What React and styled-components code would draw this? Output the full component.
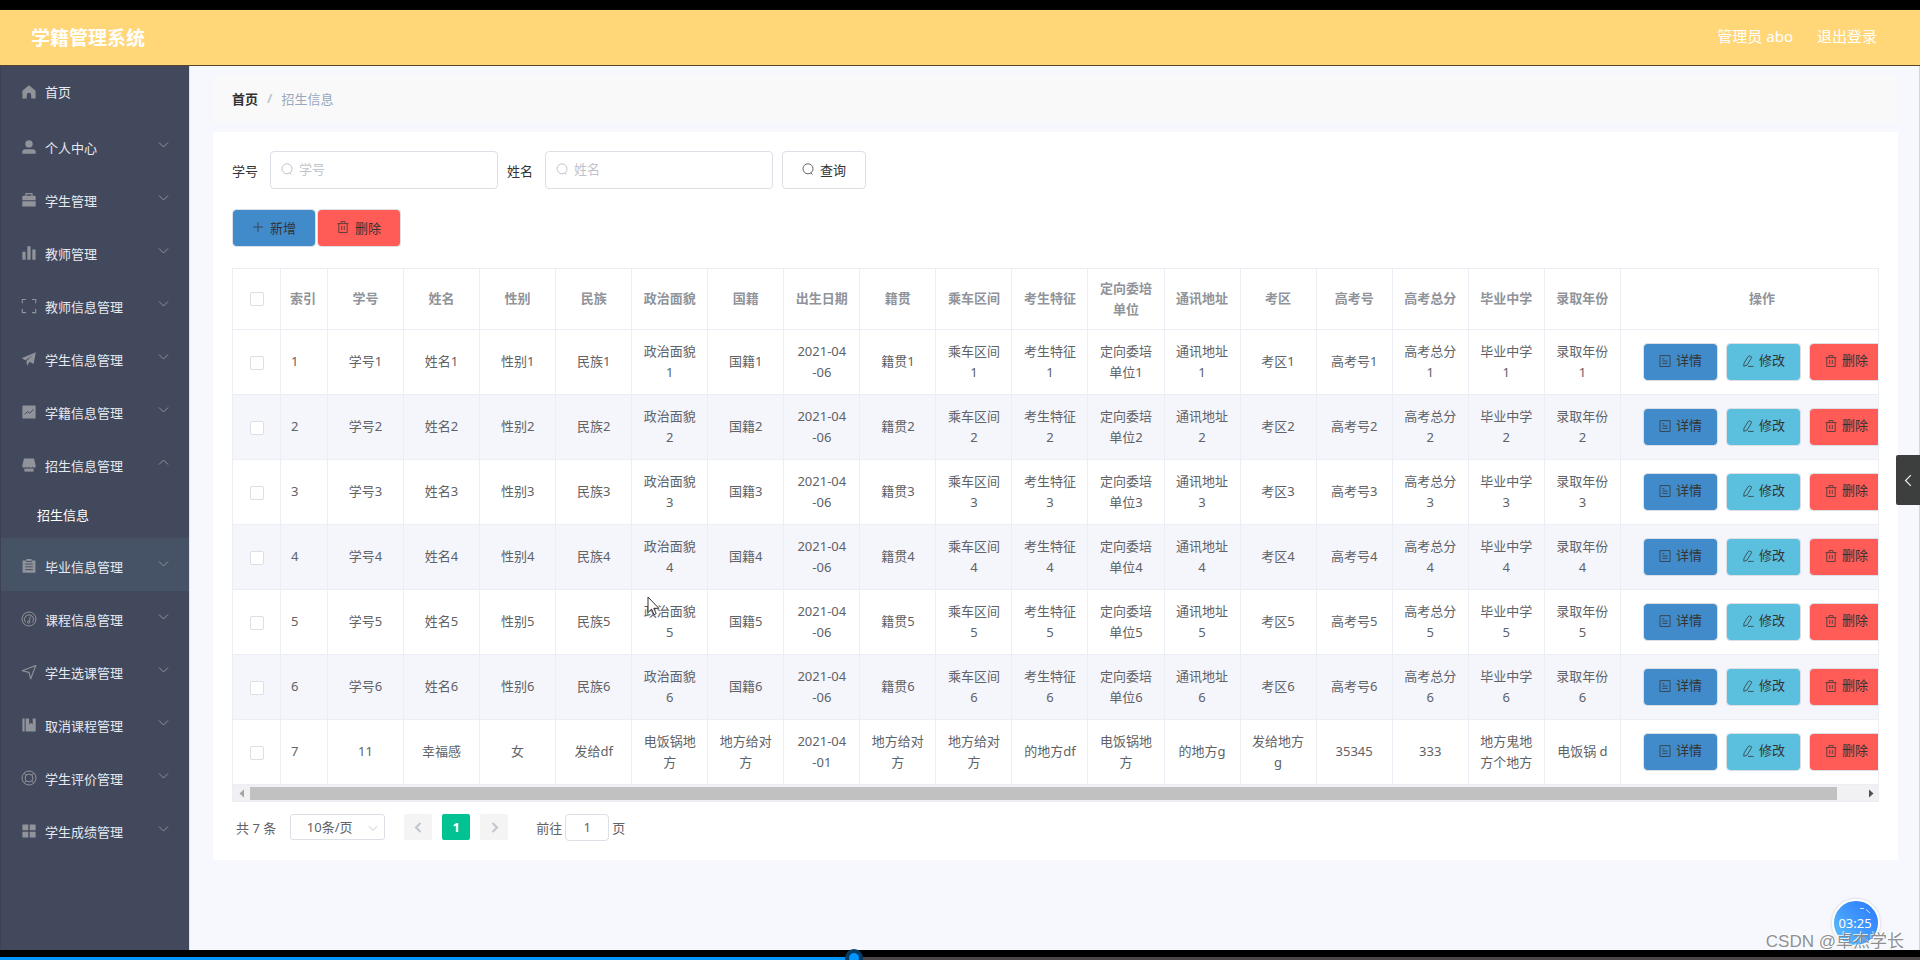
import React, { useState } from "react";
import styled, { createGlobalStyle, css } from "styled-components";

const GlobalStyle = createGlobalStyle`
  *, *::before, *::after { box-sizing: border-box; }
  body {
    margin: 0;
    font-family: "Noto Sans", "Noto Sans CJK SC", sans-serif;
    font-size: 13px;
    color: #333;
    background: #f6f8fd;
  }
  button, input, select { font: inherit; color: inherit; }
  a { color: inherit; text-decoration: none; }
`;

const Page = styled.div`
  position: relative;
  min-height: 100vh;
  display: flex;
  flex-direction: column;
  overflow: hidden;
`;

const TopBar = styled.div`
  height: 10px;
  background: #000;
`;

const Header = styled.header`
  height: 56px;
  padding: 0 43px 2px 31px;
  display: flex;
  align-items: center;
  justify-content: space-between;
  background: #ffd678;
  border-bottom: 1px solid #54452d;
  color: #fff;

  h1 {
    margin: 0;
    font-size: 19px;
    font-weight: 700;
  }
`;

const UserLinks = styled.div`
  display: flex;
  gap: 24px;
  padding-bottom: 2px;
  font-size: 15px;
`;

const Body = styled.div`
  flex: 1;
  display: flex;
`;

const Sidebar = styled.nav`
  width: 189px;
  flex-shrink: 0;
  background: #43495c;
  border-left: 1px solid #3c4153;
`;

const MenuList = styled.ul`
  margin: 0;
  padding: 0;
  list-style: none;
`;

const itemStyle = css`
  width: 100%;
  height: 53px;
  padding: 0 20px 0 21px;
  display: flex;
  align-items: center;
  gap: 9px;
  border: 0;
  background: ${(p) => (p.$hovered ? "#465265" : "transparent")};
  color: #e6eaf3;
  text-align: left;
  cursor: pointer;

  & > svg { color: #909399; flex-shrink: 0; }
`;

const HomeLink = styled.a`
  ${itemStyle}
  padding-bottom: 2px;
`;

const MenuButton = styled.button`
  ${itemStyle}
  padding-top: 3px;
  span { flex: 1; }
  & > svg:last-child { margin-bottom: 5px; }
`;

const SubLink = styled.a`
  height: 48px;
  padding-left: 36px;
  display: flex;
  align-items: center;
  color: #fff;
`;

const Main = styled.main`
  flex: 1;
  min-width: 0;
  padding: 9px 21px 0 23px;
  border-left: 1px solid #dfe4ee;
  border-right: 1px solid #d4d6da;
`;

const Breadcrumb = styled.div`
  height: 48px;
  margin-bottom: 9px;
  padding: 0 19px 2px;
  display: flex;
  align-items: center;
  gap: 9px;
  background: #f9f9f9;
  color: #97a8be;

  a { color: #303133; font-weight: 700; }
  i { color: #c0c4cc; font-weight: 700; font-style: normal; }
`;

const Panel = styled.section`
  padding: 19px 19px 20px;
  background: #fff;
`;

const SearchForm = styled.form`
  display: flex;
  align-items: center;
  gap: 9px;
  margin-bottom: 20px;
`;

const Field = styled.div`
  display: flex;
  align-items: center;
  gap: 12px;
`;

const InputBox = styled.div`
  width: 228px;
  height: 38px;
  padding: 0 10px 2px;
  display: flex;
  align-items: center;
  gap: 6px;
  border: 1px solid #dcdfe6;
  border-radius: 4px;
  color: #c0c4cc;

  input {
    flex: 1;
    min-width: 0;
    padding: 0;
    border: 0;
    outline: 0;
    background: transparent;
    color: #606266;
    &::placeholder { color: #c0c4cc; }
  }
`;

const tones = {
  plain: "#fff",
  blue: "#428bca",
  cyan: "#5bc0de",
  red: "#ff5b57",
};

const Button = styled.button`
  height: 38px;
  padding: 0 ${(p) => (p.$compact ? 15 : 19)}px 2px;
  flex-shrink: 0;
  display: inline-flex;
  align-items: center;
  gap: ${(p) => (p.$compact ? 5 : 6)}px;
  border: 1px solid #dcdfe6;
  border-radius: 4px;
  background: ${(p) => tones[p.$tone]};
  background-clip: ${(p) => (p.$tone === "plain" ? "border-box" : "padding-box")};
  color: #333;
  white-space: nowrap;
  cursor: pointer;

  svg { opacity: 0.75; }
`;

const Actions = styled.div`
  display: flex;
  gap: 1px;
  margin-bottom: 21px;
`;

const TableWrap = styled.div`
  overflow: hidden;
  border: 1px solid #ebeef5;
`;

const Table = styled.table`
  width: calc(100% + 26px);
  table-layout: fixed;
  border-collapse: separate;
  border-spacing: 0;
  color: #606266;
  line-height: 21px;

  th, td {
    height: 65px;
    padding: 0 10px 1px;
    border-right: 1px solid #ebeef5;
    border-bottom: 1px solid #ebeef5;
    text-align: center;
    white-space: pre-line;
    word-break: break-all;
  }
  th {
    height: 61px;
    color: #909399;
    font-weight: 700;
  }
  th:nth-child(2), td:nth-child(2) {
    padding-right: 0;
    text-align: left;
  }
  th:nth-child(2) { padding-left: 9px; }
  tbody tr:nth-child(even) { background: #f5f5fc; }
`;

const Check = styled.input`
  width: 14px;
  height: 14px;
  margin: 0;
  display: inline-block;
  vertical-align: middle;
  appearance: none;
  border: 1px solid #dcdfe6;
  border-radius: 2px;
  background: #fff;
  &:checked { background: #00c292; }
`;

const RowActions = styled.div`
  display: flex;
  gap: 8px;
  padding-left: 12px;
`;

const ScrollBar = styled.div`
  height: 16px;
  display: flex;
  align-items: center;
  background: #f1f1f4;
  color: #505050;

  svg { flex: 0 0 17px; }
  svg:first-child { color: #a3a3a3; }
`;

const ScrollTrack = styled.div`
  flex: 1;
  height: 13px;

  div {
    width: 98.5%;
    height: 100%;
    background: #c1c1c1;
  }
`;

const Pagination = styled.div`
  display: flex;
  align-items: center;
  margin-top: 12px;
  padding-left: 4px;
  height: 26px;
  color: #606266;
`;

const SizeSelect = styled.div`
  position: relative;
  width: 95px;
  margin: 0 19px 0 14px;

  select {
    width: 100%;
    height: 26px;
    padding: 0 24px 0 8px;
    appearance: none;
    border: 1px solid #dcdfe6;
    border-radius: 3px;
    background: #fff;
    text-align: center;
    text-align-last: center;
    font-size: 13px;
  }
  svg {
    position: absolute;
    right: 7px;
    top: 9px;
    color: #c0c4cc;
    pointer-events: none;
  }
`;

const Pager = styled.div`
  display: flex;
  gap: 10px;
`;

const PageButton = styled.button`
  width: 28px;
  height: 26px;
  padding: 0;
  display: flex;
  align-items: center;
  justify-content: center;
  border: 0;
  border-radius: 2px;
  background: ${(p) => (p.$active ? "#00c292" : "#f4f4f5")};
  color: ${(p) => (p.$active ? "#fff" : "#c0c4cc")};
  font-weight: 700;
`;

const Jump = styled.label`
  margin-left: 28px;
  display: flex;
  align-items: center;
  gap: 3px;

  input {
    width: 44px;
    height: 27px;
    padding: 0 3px;
    border: 1px solid #dcdfe6;
    border-radius: 4px;
    text-align: center;
  }
`;

const Progress = styled.div`
  height: 10px;
  padding-top: 7px;
  background: #000;
`;

const ProgressTrack = styled.div`
  height: 3px;
  background: #4a4746;
`;

const ProgressFill = styled.div`
  position: relative;
  height: 100%;
  background: #0095ff;

  &::after {
    content: "";
    position: absolute;
    right: -9px;
    top: -8px;
    width: 18px;
    height: 18px;
    border: 4px solid #063a60;
    border-radius: 50%;
    background: #0095ff;
  }
`;

const Drawer = styled.button`
  position: absolute;
  right: 0;
  top: calc(50% - 25px);
  width: 24px;
  height: 50px;
  padding: 0;
  display: flex;
  align-items: center;
  justify-content: center;
  border: 0;
  border-radius: 2px 0 0 2px;
  background: #3d3f3e;
  color: #eee;
`;

const Clock = styled.div`
  position: absolute;
  right: 40px;
  bottom: 13px;
  width: 48px;
  height: 48px;
  padding-right: 2px;
  display: flex;
  align-items: center;
  justify-content: center;
  border: 2px solid #fff;
  border-radius: 50%;
  background: linear-gradient(45deg, #62c8fb, #4199fc 50%, #2a78fc);
  box-shadow: 0 0 3px rgba(0, 0, 0, 0.2);
  color: #fff;

  svg { position: absolute; right: 7px; top: 5px; }
`;

const Watermark = styled.div`
  position: absolute;
  right: 16px;
  bottom: 8px;
  color: rgba(130, 130, 130, 0.9);
  font-family: "Liberation Sans", "Noto Sans CJK SC", sans-serif;
  font-size: 17px;
  line-height: 20px;
  text-shadow: -1px -1px 0 rgba(255, 255, 255, 0.8);
`;

const Cursor = styled.svg`
  position: absolute;
  left: 647px;
  top: 596px;
`;

const BG = "#43495c";

const glyphs = {
  home: <path d="M7 .3 13.6 5.8V13.5H9.2V10a2.2 2.2 0 0 0-4.4 0v3.5H.4V5.8z" />,
  user: (
    <>
      <circle cx="7" cy="3.9" r="3.7" />
      <path d="M.3 13.8v-1.6a3 3 0 0 1 3-3h7.4a3 3 0 0 1 3 3v1.6z" />
    </>
  ),
  briefcase: (
    <>
      <path d="M4 3V.6h6V3" fill="none" stroke="currentColor" strokeWidth="1.2" />
      <path d="M.3 3.6A1 1 0 0 1 1.3 2.8h11.4a1 1 0 0 1 1 .8v3.6H.3zM.3 8.2h13.4v5.4H.3z" />
    </>
  ),
  bars: <path d="M.4 5.8h3.2v8H.4zM5.3.3h3.3v13.5H5.3zM10.3 3.4h3.3v10.4h-3.3z" />,
  corners: (
    <path
      d="M4 .5H.3v3.7M10 .5h3.7v3.7M4 13.6H.3V9.9M10 13.6h3.7V9.9"
      fill="none"
      stroke="currentColor"
      strokeWidth="1.1"
    />
  ),
  plane: <path d="M-.4 6.2 13.8.2 11.6 12 7.6 9.7 5.1 13.8 4.4 9 11 3.2 3.4 8.2z" />,
  trend: (
    <>
      <rect x=".4" y=".4" width="13.2" height="13.2" rx=".6" />
      <path d="m2.6 9.4 2.8-2.9 2.3 1.7 3.7-3.8" fill="none" stroke={BG} />
    </>
  ),
  shop: (
    <>
      <path d="M2 .4h10l1.7 7.2a1.7 1.7 0 0 1-3.3 1 1.8 1.8 0 0 1-3.4 0 1.8 1.8 0 0 1-3.4 0 1.7 1.7 0 0 1-3.3-1z" />
      <path d="M2.4 10.6h9.2v3H2.4z" />
    </>
  ),
  clipboard: (
    <>
      <path d="M.6 1.4h12.8v12.4H.6zM4.4 0h5.2v2H4.4z" />
      <path d="M3.2 5h7.6M3.2 7.8h7.6M3.2 10.6h7.6M4 2.4h6" stroke={BG} strokeWidth=".9" />
    </>
  ),
  gauge: (
    <g fill="none" stroke="currentColor">
      <circle cx="7" cy="7" r="7" />
      <path d="M3.4 10.3A4.6 4.6 0 1 1 10.6 10.3" />
      <path d="M8.4 4.6 7.3 8.8" />
      <circle cx="6.7" cy="10" r="1.2" />
    </g>
  ),
  position: (
    <path
      d="M.2 5.8 13.8.5 8.7 13.8 7 7.4z"
      fill="none"
      stroke="currentColor"
      strokeWidth="1.1"
      strokeLinejoin="round"
    />
  ),
  book: <path d="M.4.4h2.2v13.2H.4zM3.6.4h3.5v6l1.8-1.7 1.8 1.7v-6h3v13.2H3.6z" />,
  ring: (
    <g fill="none" stroke="currentColor">
      <circle cx="7" cy="7" r="7" />
      <circle cx="7" cy="7" r="3.9" />
      <path d="m2.2 2.2 2 2M11.8 2.2l-2 2M2.2 11.8l2-2M11.8 11.8l-2-2" />
    </g>
  ),
  grid: <path d="M.4.4h5.9v5.9H.4zM7.7.4h5.9v5.9H7.7zM.4 7.7h5.9v5.9H.4zM7.7 7.7h5.9v5.9H7.7z" />,
};

const MenuIcon = ({ name }) => (
  <svg width="14" height="14" viewBox="0 0 14 14" fill="currentColor" overflow="visible">
    {glyphs[name]}
  </svg>
);

const chevrons = {
  down: "M1 3.5 5.5 8 10 3.5",
  up: "M1 7.5 5.5 3 10 7.5",
  left: "M7.5 1 3 5.5 7.5 10",
  right: "M3.5 1 8 5.5 3.5 10",
};

const Chevron = ({ dir, size = 11, weight = 1 }) => (
  <svg width={size} height={size} viewBox="0 0 11 11" fill="none" stroke="currentColor" strokeWidth={weight}>
    <path d={chevrons[dir]} />
  </svg>
);

const LineIcon = ({ children }) => (
  <svg width="12" height="12" viewBox="0 0 12 12" fill="none" stroke="currentColor" strokeWidth="1">
    {children}
  </svg>
);

const SearchIcon = () => (
  <LineIcon>
    <circle cx="6" cy="5.8" r="5" />
    <path d="m8.6 9.8 2 1.7" />
  </LineIcon>
);

const PlusIcon = () => (
  <LineIcon><path d="M6 1v10M1 6h10" /></LineIcon>
);

const TrashIcon = () => (
  <LineIcon><path d="M.5 2.6h11M4 2.4V.6h4v1.8M1.8 2.8v8.7h8.4V2.8M4.7 5v4M7.3 5v4" /></LineIcon>
);

const DetailIcon = () => (
  <LineIcon><path d="M1 .6h10v10.9H1zM3.4 3.8h2M3.4 6h5.2M3.4 8.4h5.2" /></LineIcon>
);

const EditIcon = () => (
  <LineIcon><path d="M7.4.8 9.8 2.2 5 10.2 1.8 11.3 2 8.2 6 1.8zM6 11.4h5.6" /></LineIcon>
);

const menu = [
  { icon: "user", text: "个人中心" },
  { icon: "briefcase", text: "学生管理" },
  { icon: "bars", text: "教师管理" },
  { icon: "corners", text: "教师信息管理" },
  { icon: "plane", text: "学生信息管理" },
  { icon: "trend", text: "学籍信息管理" },
  { icon: "shop", text: "招生信息管理", children: ["招生信息"] },
  { icon: "clipboard", text: "毕业信息管理", hovered: true },
  { icon: "gauge", text: "课程信息管理" },
  { icon: "position", text: "学生选课管理" },
  { icon: "book", text: "取消课程管理" },
  { icon: "ring", text: "学生评价管理" },
  { icon: "grid", text: "学生成绩管理" },
];

const columns = [
  "学号", "姓名", "性别", "民族", "政治面貌", "国籍", "出生日期", "籍贯", "乘车区间",
  "考生特征", "定向委培单位", "通讯地址", "考区", "高考号", "高考总分", "毕业中学", "录取年份",
];

const rows = [1, 2, 3, 4, 5, 6].map((n) =>
  columns.map((name) => (name === "出生日期" ? "2021-04\n-06" : name + n))
);
rows.push([
  "11", "幸福感", "女", "发给df", "电饭锅地方", "地方给对方", "2021-04\n-01", "地方给对方", "地方给对方",
  "的地方df", "电饭锅地方", "的地方g", "发给地方g", "35345", "333", "地方鬼地方个地方", "电饭锅 d",
]);

const played = 44.5;

const App = () => {
  const [checked, setChecked] = useState([]);

  const toggle = (i) =>
    setChecked((list) => (list.includes(i) ? list.filter((x) => x !== i) : [...list, i]));
  const allChecked = checked.length === rows.length;

  return (
    <Page>
      <GlobalStyle />
      <TopBar />
      <Header>
        <h1>学籍管理系统</h1>
        <UserLinks>
          <span>管理员 abo</span>
          <a href="#logout">退出登录</a>
        </UserLinks>
      </Header>

      <Body>
        <Sidebar>
          <MenuList>
            <li>
              <HomeLink href="#home"><MenuIcon name="home" />首页</HomeLink>
            </li>
            {menu.map((item) => (
              <li key={item.text}>
                <MenuButton type="button" $hovered={item.hovered}>
                  <MenuIcon name={item.icon} />
                  <span>{item.text}</span>
                  <Chevron dir={item.children ? "up" : "down"} />
                </MenuButton>
                {item.children?.map((child) => (
                  <SubLink key={child} href="#list">{child}</SubLink>
                ))}
              </li>
            ))}
          </MenuList>
        </Sidebar>

        <Main>
          <Breadcrumb>
            <a href="#home">首页</a>
            <i>/</i>
            <span>招生信息</span>
          </Breadcrumb>

          <Panel>
            <SearchForm onSubmit={(e) => e.preventDefault()}>
              <Field>
                <label htmlFor="xuehao">学号</label>
                <InputBox>
                  <SearchIcon />
                  <input id="xuehao" placeholder="学号" />
                </InputBox>
              </Field>
              <Field>
                <label htmlFor="xingming">姓名</label>
                <InputBox>
                  <SearchIcon />
                  <input id="xingming" placeholder="姓名" />
                </InputBox>
              </Field>
              <Button $tone="plain"><SearchIcon />查询</Button>
            </SearchForm>

            <Actions>
              <Button type="button" $tone="blue"><PlusIcon />新增</Button>
              <Button type="button" $tone="red"><TrashIcon />删除</Button>
            </Actions>

            <TableWrap>
              <Table>
                <colgroup>
                  <col width="48" />
                  <col width="47" />
                  {columns.map((name) => <col key={name} />)}
                  <col width="283" />
                </colgroup>
                <thead>
                  <tr>
                    <th>
                      <Check
                        type="checkbox"
                        aria-label="全选"
                        checked={allChecked}
                        onChange={() => setChecked(allChecked ? [] : rows.map((_, i) => i))}
                      />
                    </th>
                    <th>索引</th>
                    {columns.map((name) => <th key={name}>{name}</th>)}
                    <th>操作</th>
                  </tr>
                </thead>
                <tbody>
                  {rows.map((row, i) => (
                    <tr key={i}>
                      <td>
                        <Check
                          type="checkbox"
                          aria-label={`选择 ${i + 1}`}
                          checked={checked.includes(i)}
                          onChange={() => toggle(i)}
                        />
                      </td>
                      <td>{i + 1}</td>
                      {row.map((value, j) => <td key={j}>{value}</td>)}
                      <td>
                        <RowActions>
                          <Button type="button" $compact $tone="blue"><DetailIcon />详情</Button>
                          <Button type="button" $compact $tone="cyan"><EditIcon />修改</Button>
                          <Button type="button" $compact $tone="red"><TrashIcon />删除</Button>
                        </RowActions>
                      </td>
                    </tr>
                  ))}
                </tbody>
              </Table>
              <ScrollBar>
                <svg width="17" height="9" viewBox="0 0 17 9" fill="currentColor"><path d="M11 .5v8L6.5 4.5z" /></svg>
                <ScrollTrack><div /></ScrollTrack>
                <svg width="17" height="9" viewBox="0 0 17 9" fill="currentColor"><path d="M8 .5v8l4.5-4z" /></svg>
              </ScrollBar>
            </TableWrap>

            <Pagination>
              <span>共 7 条</span>
              <SizeSelect>
                <select aria-label="每页条数" defaultValue="10">
                  <option value="10">10条/页</option>
                  <option value="20">20条/页</option>
                  <option value="50">50条/页</option>
                </select>
                <Chevron dir="down" size={10} />
              </SizeSelect>
              <Pager>
                <PageButton type="button" aria-label="上一页"><Chevron dir="left" weight={2} /></PageButton>
                <PageButton type="button" $active>1</PageButton>
                <PageButton type="button" aria-label="下一页"><Chevron dir="right" weight={2} /></PageButton>
              </Pager>
              <Jump>
                前往
                <input defaultValue="1" />
                页
              </Jump>
            </Pagination>
          </Panel>
        </Main>
      </Body>

      <Progress>
        <ProgressTrack>
          <ProgressFill style={{ width: `${played}%` }} />
        </ProgressTrack>
      </Progress>

      <Drawer type="button" aria-label="展开">
        <Chevron dir="left" size={13} weight={1} />
      </Drawer>
      <Clock>
        <svg width="12" height="9" viewBox="0 0 12 9" fill="none" stroke="#cfe6ff">
          <path d="M1 2.5h4M7 3.5 11 7" />
        </svg>
        03:25
      </Clock>
      <Watermark>CSDN @卓杰学长</Watermark>
      <Cursor width="13" height="20" viewBox="0 0 13 20" fill="#fff" stroke="#333">
        <path d="M1 1v15.5l3.6-3.4 2.4 5.6 2.2-1-2.4-5.4h5z" />
      </Cursor>
    </Page>
  );
};

export default App;
